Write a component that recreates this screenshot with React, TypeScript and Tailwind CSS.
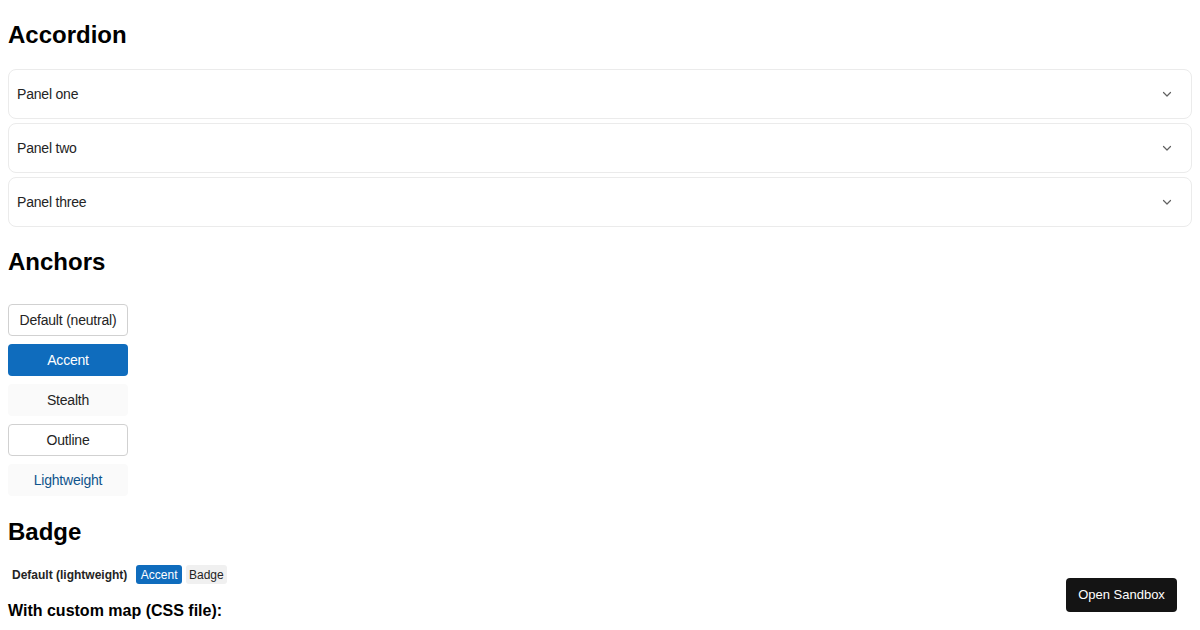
import React from "react";

const Chevron = () => (
  <svg width="12" height="12" viewBox="0 0 12 12" fill="none">
    <path d="M2.5 4.5L6 8L9.5 4.5" stroke="#616161" strokeWidth="1.2" strokeLinecap="round" strokeLinejoin="round" />
  </svg>
);

const Panel = ({ label }: { label: string }) => (
  <div className="h-[50px] flex items-center justify-between rounded-[8px] border border-[#ebebeb] bg-white pl-[8px] pr-[18px]">
    <span className="text-[14px] tracking-[-0.2px] text-[#242424]">{label}</span>
    <Chevron />
  </div>
);

export default function App() {
  return (
    <div className="min-h-[630px] bg-white px-[8px] text-[#242424]" style={{ fontFamily: '"Liberation Sans", Arial, sans-serif' }}>
      <h2 className="pt-[21px] text-[24px] leading-[28px] font-bold text-black">Accordion</h2>
      <div className="mt-[20px] flex flex-col gap-[4px]">
        <Panel label="Panel one" />
        <Panel label="Panel two" />
        <Panel label="Panel three" />
      </div>

      <h2 className="mt-[21px] text-[24px] leading-[28px] font-bold text-black">Anchors</h2>
      <div className="mt-[28px] flex w-[120px] flex-col gap-[8px] text-[14px] tracking-[-0.2px]">
        <a className="flex h-[32px] items-center justify-center rounded-[4px] border border-[#d1d1d1] bg-white text-[#242424]">Default (neutral)</a>
        <a className="flex h-[32px] items-center justify-center rounded-[4px] bg-[#0f6cbd] text-white">Accent</a>
        <a className="flex h-[32px] items-center justify-center rounded-[4px] bg-[#fafafa] text-[#242424]">Stealth</a>
        <a className="flex h-[32px] items-center justify-center rounded-[4px] border border-[#d1d1d1] bg-white text-[#242424]">Outline</a>
        <a className="flex h-[32px] items-center justify-center rounded-[4px] bg-[#fafafa] text-[#0f548c]">Lightweight</a>
      </div>

      <h2 className="mt-[22px] text-[24px] leading-[28px] font-bold text-black">Badge</h2>
      <div className="mt-[19px] flex items-center text-[12px]">
        <span className="flex h-[19px] items-center px-[4px] font-bold text-[#242424]">Default (lightweight)</span>
        <span className="ml-[5px] flex h-[19px] items-center rounded-[3px] bg-[#0f6cbd] px-[4.5px] text-white">Accent</span>
        <span className="ml-[3.5px] flex h-[19px] items-center rounded-[3px] bg-[#f0f0f0] px-[3.5px] text-[#242424]">Badge</span>
      </div>
      <h3 className="mt-[17px] text-[16px] leading-[19px] font-bold text-black">With custom map (CSS file):</h3>

      <div className="fixed left-[1066px] top-[578px] flex h-[34px] w-[111px] items-center justify-center rounded-[4px] bg-[#141414] text-[13px] text-white">
        Open Sandbox
      </div>
    </div>
  );
}
